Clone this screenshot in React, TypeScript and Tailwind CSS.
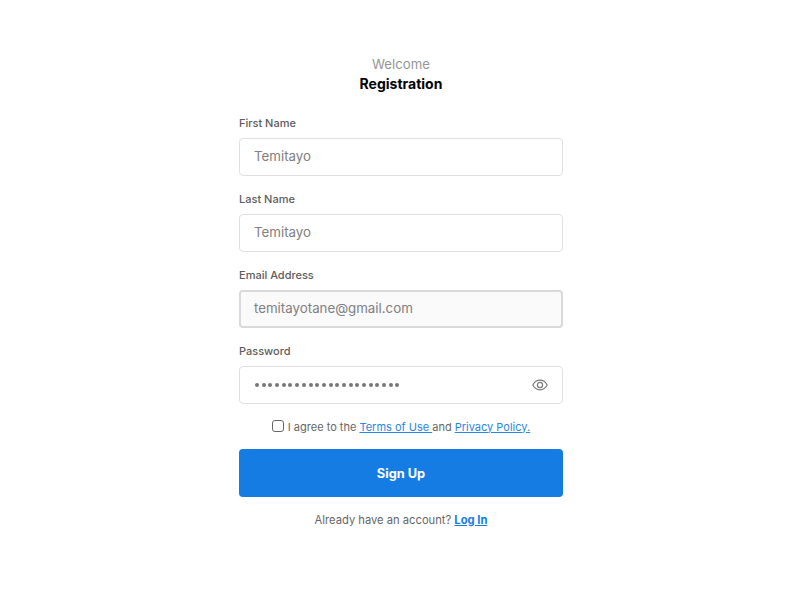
import React from "react";

const font = "[font-family:Inter,'Liberation_Sans',sans-serif]";
const labelCls = "h-[16px] pt-[1px] text-[11px] leading-[16px] font-medium text-[#5c5c5c] mb-[8px]";

function Field({ label, value, filled }: { label: string; value: string; filled?: boolean }) {
  return (
    <div className="flex flex-col">
      <label className={labelCls}>{label}</label>
      <div
        className={
          filled
            ? "flex items-center h-[38px] rounded-[4px] border-2 border-[#d9d9d9] bg-[#fafafa] pl-[13px] pr-[14px] text-[13.3px] text-[#808080]"
            : "flex items-center h-[38px] rounded-[4px] border border-[#e0e0e0] bg-white pl-[14px] pr-[15px] text-[13.3px] text-[#808080]"
        }
      >
        {value}
      </div>
    </div>
  );
}

export default function App() {
  return (
    <div className={`${font} w-[800px] h-[600px] bg-white flex pl-[239px]`}>
      <div className="w-[324px] pt-[56px] flex flex-col">
        <div className="text-center text-[13.2px] leading-[16px] text-[#969696]">Welcome</div>
        <div className="text-center text-[14px] leading-[20px] font-bold text-black mt-[2px] mb-[20px]">Registration</div>
        <div className="flex flex-col gap-[14px]">
          <Field label="First Name" value="Temitayo" />
          <Field label="Last Name" value="Temitayo" />
          <Field label="Email Address" value="temitayotane@gmail.com" filled />
          <div className="flex flex-col">
            <label className={labelCls}>Password</label>
            <div className="flex items-center justify-between h-[38px] rounded-[4px] border border-[#e0e0e0] bg-white pl-[15px] pr-[14px]">
              <div className="flex gap-[2.7px]">
                {Array.from({ length: 22 }).map((_, i) => (
                  <span key={i} className="w-[4px] h-[4px] rounded-full bg-[#777777]" />
                ))}
              </div>
              <svg width="16" height="12" viewBox="0 0 16 12" fill="none" stroke="#777777" strokeWidth="1.2">
                <path d="M.8 6C2.5 2.8 5 1.2 8 1.2S13.5 2.8 15.2 6C13.5 9.2 11 10.8 8 10.8S2.5 9.2.8 6Z" />
                <circle cx="8" cy="6" r="2.6" />
              </svg>
            </div>
          </div>
        </div>
        <div className="flex items-center justify-center h-[16px] mt-[14px] text-[11px] leading-[16px] text-[#666666]">
          <span className="w-[12px] h-[12px] rounded-[3px] border border-[#666666] mr-[4px]" />
          <span className="pt-[1px]">
            I agree to the{" "}
            <a className="text-[#2a86e6] underline">Terms of Use </a>
            and{" "}
            <a className="text-[#2a86e6] underline">Privacy Policy.</a>
          </span>
        </div>
        <button className="h-[48px] pt-[2px] mt-[15px] rounded-[4px] bg-[#157ce3] text-white text-[12.8px] font-bold">Sign Up</button>
        <div className="text-center text-[11.2px] leading-[16px] text-[#666666] mt-[15px]">
          Already have an account? <a className="text-[#157ce3] font-bold underline">Log In</a>
        </div>
      </div>
    </div>
  );
}
